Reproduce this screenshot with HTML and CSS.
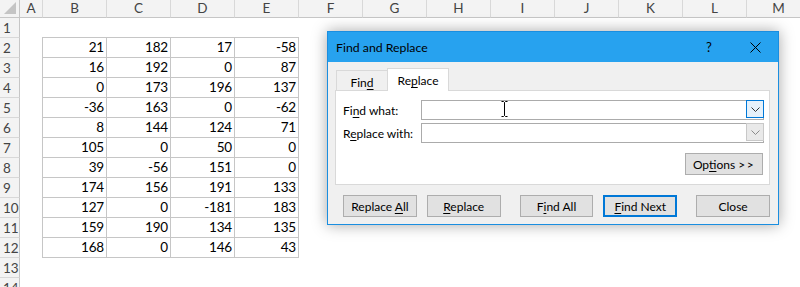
FILE: index.html
```html
<!DOCTYPE html>
<html>
<head>
<meta charset="utf-8">
<link rel="stylesheet" href="styles.css">
</head>
<body>
<div class="sheet">
  <div class="corner"><svg width="19" height="17" viewBox="0 0 19 17"><polygon points="4,14 16,14 16,2" fill="#c4c4c4"/></svg></div>
  <div class="ch">A</div><div class="ch">B</div><div class="ch">C</div><div class="ch">D</div><div class="ch">E</div><div class="ch">F</div><div class="ch">G</div><div class="ch">H</div><div class="ch">I</div><div class="ch">J</div><div class="ch">K</div><div class="ch">L</div><div class="ch">M</div>
  <div class="rh">1</div><div class="rh">2</div><div class="rh">3</div><div class="rh">4</div><div class="rh">5</div><div class="rh">6</div><div class="rh">7</div><div class="rh">8</div><div class="rh">9</div><div class="rh">10</div><div class="rh">11</div><div class="rh">12</div><div class="rh">13</div><div class="rh">14</div>
  <div class="data">
    <span>21</span><span>182</span><span>17</span><span>-58</span>
    <span>16</span><span>192</span><span>0</span><span>87</span>
    <span>0</span><span>173</span><span>196</span><span>137</span>
    <span>-36</span><span>163</span><span>0</span><span>-62</span>
    <span>8</span><span>144</span><span>124</span><span>71</span>
    <span>105</span><span>0</span><span>50</span><span>0</span>
    <span>39</span><span>-56</span><span>151</span><span>0</span>
    <span>174</span><span>156</span><span>191</span><span>133</span>
    <span>127</span><span>0</span><span>-181</span><span>183</span>
    <span>159</span><span>190</span><span>134</span><span>135</span>
    <span>168</span><span>0</span><span>146</span><span>43</span>
  </div>
</div>

<div class="dialog">
  <div class="titlebar">
    <div class="title">Find and Replace</div>
    <div class="tbtn help">?</div>
    <div class="tbtn close"><svg width="11" height="11" viewBox="0 0 11 11"><path d="M0.5 0.5 L10.5 10.5 M10.5 0.5 L0.5 10.5" stroke="#000" stroke-width="1"/></svg></div>
  </div>
  <div class="dbody">
    <div class="tabs">
      <div class="tab"><span>Fin<u>d</u></span></div>
      <div class="tab active"><span>Re<u>p</u>lace</span></div>
    </div>
    <div class="panel">
      <div class="frow">
        <label class="lbl">Fi<u>n</u>d what:</label>
        <div class="combo">
          <div class="field"><svg class="ibeam" width="7" height="16" viewBox="0 0 7 16"><path d="M0.5 0.5 H2.5 L3.5 1.5 L4.5 0.5 H6.5 M3.5 1.5 V14.5 M0.5 15.5 H2.5 L3.5 14.5 L4.5 15.5 H6.5" stroke="#000" fill="none" stroke-width="1"/></svg></div>
          <div class="drop focus"><svg width="9" height="5" viewBox="0 0 9 5"><path d="M0.5 0.5 L4.5 4.5 L8.5 0.5" stroke="#333" fill="none"/></svg></div>
        </div>
      </div>
      <div class="frow second">
        <label class="lbl">R<u>e</u>place with:</label>
        <div class="combo">
          <div class="field"></div>
          <div class="drop"><svg width="9" height="5" viewBox="0 0 9 5"><path d="M0.5 0.5 L4.5 4.5 L8.5 0.5" stroke="#8a8a8a" fill="none"/></svg></div>
        </div>
      </div>
      <div class="orow">
        <button class="btn options"><span>Op<u>t</u>ions <span class="gt">&gt;&gt;</span></span></button>
      </div>
    </div>
    <div class="brow">
      <button class="btn"><span>Replace <u>A</u>ll</span></button>
      <button class="btn"><span><u>R</u>eplace</span></button>
      <button class="btn wide"><span>F<u>i</u>nd All</span></button>
      <button class="btn default"><span><u>F</u>ind Next</span></button>
      <button class="btn wide"><span>Close</span></button>
    </div>
  </div>
</div>
</body>
</html>
```

FILE: styles.css
```css
* { box-sizing: border-box; }
html, body { margin: 0; padding: 0; }
body {
  width: 800px;
  height: 287px;
  overflow: hidden;
  position: relative;
  background: #fff;
  font-family: Lato, "Liberation Sans", sans-serif;
}

.sheet {
  display: grid;
  grid-template-columns: 20px 23px repeat(12, 64px);
  grid-template-rows: 18px repeat(14, 20px);
  width: max-content;
  font-size: 13.5px;
  color: #000;
}
.corner {
  background: #f3f3f3;
  border-right: 1px solid #c6c6c6;
  border-bottom: 1px solid #c6c6c6;
}
.corner svg { display: block; }
.ch {
  background: #f3f3f3;
  border-right: 1px solid #d8d8d8;
  border-bottom: 1px solid #c6c6c6;
  display: flex;
  align-items: center;
  justify-content: center;
  color: #444;
  padding-bottom: 2px;
}
.rh {
  grid-column: 1;
  background: #f3f3f3;
  border-right: 1px solid #c6c6c6;
  border-bottom: 1px solid #d8d8d8;
  display: flex;
  align-items: center;
  padding-left: 3px;
  color: #444;
}
.data {
  grid-column: 3 / 7;
  grid-row: 3 / 14;
  margin: -1px 0 0 -1px;
  display: grid;
  grid-template-columns: repeat(4, 64px);
  grid-auto-rows: 20px;
  border-left: 1px solid #c6c6c6;
  border-top: 1px solid #c6c6c6;
}
.data span {
  border-right: 1px solid #c6c6c6;
  border-bottom: 1px solid #c6c6c6;
  text-align: right;
  padding-right: 2px;
  line-height: 19px;
  letter-spacing: -0.2px;
}

.dialog {
  position: absolute;
  left: 327px;
  top: 31px;
  width: 452px;
  height: 194px;
  border: 1px solid #1a8ee0;
  background: #f0f0f0;
  box-shadow: 0 0 14px rgba(0, 0, 0, 0.35);
  font-family: Lato, "Liberation Sans", sans-serif;
  font-size: 12px;
  color: #000;
  display: flex;
  flex-direction: column;
}
.titlebar {
  height: 30px;
  background: #27a2ef;
  display: flex;
  align-items: center;
  padding-left: 8px;
  flex: none;
}
.title { flex: 1; font-size: 12.3px; }
.tbtn {
  width: 46px;
  height: 30px;
  display: flex;
  align-items: center;
  justify-content: center;
}
.help { font-size: 13px; }
.close svg { display: block; }

.dbody {
  padding: 7px 8px 0 7px;
  display: flex;
  flex-direction: column;
}
.tabs {
  display: flex;
  align-items: flex-end;
  padding-left: 1px;
  height: 22px;
  margin-top: -1px;
}
.tab {
  width: 51px;
  height: 20px;
  border: 1px solid #d9d9d9;
  border-right: none;
  border-bottom: none;
  display: flex;
  align-items: center;
  justify-content: center;
  padding-top: 3px;
}
.tab.active {
  width: 62px;
  height: 23px;
  background: #fff;
  border-right: 1px solid #d9d9d9;
  margin-bottom: -1px;
  position: relative;
  z-index: 1;
  padding-top: 1px;
}
.panel {
  height: 95px;
  border: 1px solid #d9d9d9;
  background: #fff;
  padding: 9px 5px 0 7px;
}
.frow {
  display: flex;
  align-items: center;
  height: 20px;
}
.frow.second { margin-top: 3px; }
.lbl { width: 78px; flex: none; }
.combo {
  flex: 1;
  height: 20px;
  border: 1px solid #ababab;
  display: flex;
  background: #fff;
}
.field { flex: 1; position: relative; }
.ibeam { position: absolute; left: 79px; top: 0px; }
.drop {
  width: 18px;
  margin: -1px -1px 1px 0;
  border: 1px solid #c8c8c8;
  background: #e9e9e9;
  display: flex;
  align-items: center;
  justify-content: center;
}
.drop.focus {
  border-color: #0078d7;
  background: #e5f1fb;
}
.drop svg { display: block; }
.orow {
  display: flex;
  justify-content: flex-end;
  margin-top: 10px;
  padding-right: 1px;
}
.btn {
  font: inherit;
  color: #000;
  height: 22px;
  width: 74px;
  background: #e1e1e1;
  border: 1px solid #adadad;
  padding: 0;
  margin: 0;
  display: flex;
  align-items: center;
  justify-content: center;
}
.btn.options { width: 78px; }
.gt { letter-spacing: 1.5px; }
.brow {
  display: flex;
  margin-top: 10px;
  padding-left: 8px;
  gap: 10px;
}
.brow .wide { margin-left: 9px; }
.btn.default { border: 2px solid #0078d7; }
u { text-decoration-thickness: 1px; text-underline-offset: 2px; }
```
